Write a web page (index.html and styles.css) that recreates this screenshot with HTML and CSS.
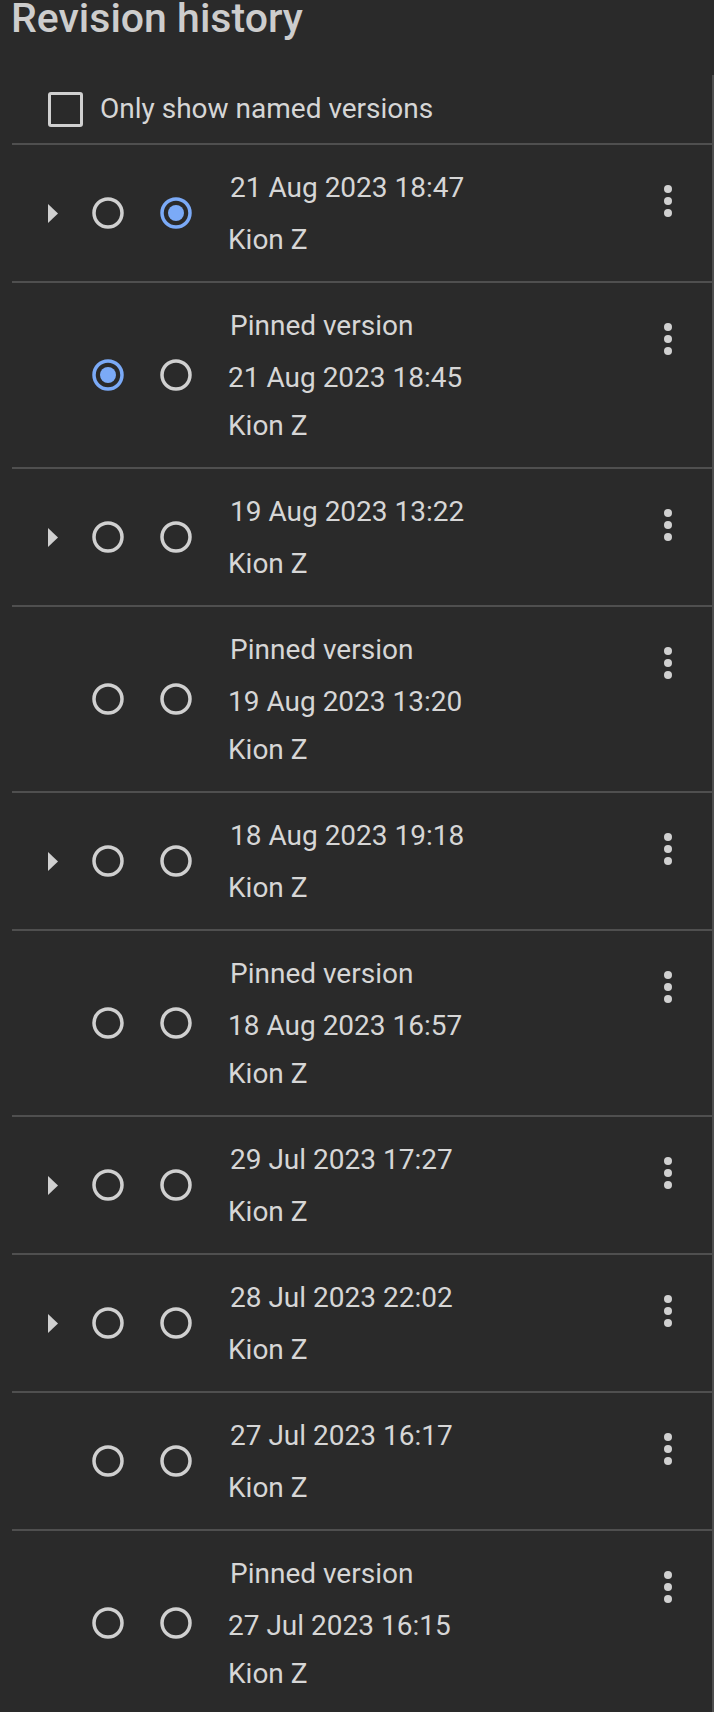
FILE: index.html
```html
<!DOCTYPE html>
<html lang="en">
<head>
<meta charset="utf-8">
<title>Revision history</title>
<link rel="stylesheet" href="styles.css">
</head>
<body>
<h1 class="title">Revision history</h1>
<div class="panel">
  <label class="filter">
    <span class="checkbox"></span>
    <span class="filter-label">Only show named versions</span>
  </label>
  <ul class="revs">
    <li class="rev">
      <span class="expander"><svg viewBox="0 0 10 19" width="10" height="19"><path d="M0 0 L10 9.5 L0 19 Z"/></svg></span>
      <span class="radio-cell"><svg class="radio" viewBox="0 0 32 32"><circle cx="16" cy="16" r="14"/></svg></span>
      <span class="radio-cell"><svg class="radio on" viewBox="0 0 32 32"><circle cx="16" cy="16" r="14"/><circle class="dot" cx="16" cy="16" r="8"/></svg></span>
      <div class="info"><div class="line first">21 Aug 2023 18:47</div><div class="line">Kion Z</div></div>
      <span class="more"><svg viewBox="0 0 48 48"><circle cx="24" cy="12" r="4"/><circle cx="24" cy="24" r="4"/><circle cx="24" cy="36" r="4"/></svg></span>
    </li>
    <li class="rev">
      <span class="expander"></span>
      <span class="radio-cell"><svg class="radio on" viewBox="0 0 32 32"><circle cx="16" cy="16" r="14"/><circle class="dot" cx="16" cy="16" r="8"/></svg></span>
      <span class="radio-cell"><svg class="radio" viewBox="0 0 32 32"><circle cx="16" cy="16" r="14"/></svg></span>
      <div class="info"><div class="line first">Pinned version</div><div class="line">21 Aug 2023 18:45</div><div class="line">Kion Z</div></div>
      <span class="more"><svg viewBox="0 0 48 48"><circle cx="24" cy="12" r="4"/><circle cx="24" cy="24" r="4"/><circle cx="24" cy="36" r="4"/></svg></span>
    </li>
    <li class="rev">
      <span class="expander"><svg viewBox="0 0 10 19" width="10" height="19"><path d="M0 0 L10 9.5 L0 19 Z"/></svg></span>
      <span class="radio-cell"><svg class="radio" viewBox="0 0 32 32"><circle cx="16" cy="16" r="14"/></svg></span>
      <span class="radio-cell"><svg class="radio" viewBox="0 0 32 32"><circle cx="16" cy="16" r="14"/></svg></span>
      <div class="info"><div class="line first">19 Aug 2023 13:22</div><div class="line">Kion Z</div></div>
      <span class="more"><svg viewBox="0 0 48 48"><circle cx="24" cy="12" r="4"/><circle cx="24" cy="24" r="4"/><circle cx="24" cy="36" r="4"/></svg></span>
    </li>
    <li class="rev">
      <span class="expander"></span>
      <span class="radio-cell"><svg class="radio" viewBox="0 0 32 32"><circle cx="16" cy="16" r="14"/></svg></span>
      <span class="radio-cell"><svg class="radio" viewBox="0 0 32 32"><circle cx="16" cy="16" r="14"/></svg></span>
      <div class="info"><div class="line first">Pinned version</div><div class="line">19 Aug 2023 13:20</div><div class="line">Kion Z</div></div>
      <span class="more"><svg viewBox="0 0 48 48"><circle cx="24" cy="12" r="4"/><circle cx="24" cy="24" r="4"/><circle cx="24" cy="36" r="4"/></svg></span>
    </li>
    <li class="rev">
      <span class="expander"><svg viewBox="0 0 10 19" width="10" height="19"><path d="M0 0 L10 9.5 L0 19 Z"/></svg></span>
      <span class="radio-cell"><svg class="radio" viewBox="0 0 32 32"><circle cx="16" cy="16" r="14"/></svg></span>
      <span class="radio-cell"><svg class="radio" viewBox="0 0 32 32"><circle cx="16" cy="16" r="14"/></svg></span>
      <div class="info"><div class="line first">18 Aug 2023 19:18</div><div class="line">Kion Z</div></div>
      <span class="more"><svg viewBox="0 0 48 48"><circle cx="24" cy="12" r="4"/><circle cx="24" cy="24" r="4"/><circle cx="24" cy="36" r="4"/></svg></span>
    </li>
    <li class="rev">
      <span class="expander"></span>
      <span class="radio-cell"><svg class="radio" viewBox="0 0 32 32"><circle cx="16" cy="16" r="14"/></svg></span>
      <span class="radio-cell"><svg class="radio" viewBox="0 0 32 32"><circle cx="16" cy="16" r="14"/></svg></span>
      <div class="info"><div class="line first">Pinned version</div><div class="line">18 Aug 2023 16:57</div><div class="line">Kion Z</div></div>
      <span class="more"><svg viewBox="0 0 48 48"><circle cx="24" cy="12" r="4"/><circle cx="24" cy="24" r="4"/><circle cx="24" cy="36" r="4"/></svg></span>
    </li>
    <li class="rev">
      <span class="expander"><svg viewBox="0 0 10 19" width="10" height="19"><path d="M0 0 L10 9.5 L0 19 Z"/></svg></span>
      <span class="radio-cell"><svg class="radio" viewBox="0 0 32 32"><circle cx="16" cy="16" r="14"/></svg></span>
      <span class="radio-cell"><svg class="radio" viewBox="0 0 32 32"><circle cx="16" cy="16" r="14"/></svg></span>
      <div class="info"><div class="line first">29 Jul 2023 17:27</div><div class="line">Kion Z</div></div>
      <span class="more"><svg viewBox="0 0 48 48"><circle cx="24" cy="12" r="4"/><circle cx="24" cy="24" r="4"/><circle cx="24" cy="36" r="4"/></svg></span>
    </li>
    <li class="rev">
      <span class="expander"><svg viewBox="0 0 10 19" width="10" height="19"><path d="M0 0 L10 9.5 L0 19 Z"/></svg></span>
      <span class="radio-cell"><svg class="radio" viewBox="0 0 32 32"><circle cx="16" cy="16" r="14"/></svg></span>
      <span class="radio-cell"><svg class="radio" viewBox="0 0 32 32"><circle cx="16" cy="16" r="14"/></svg></span>
      <div class="info"><div class="line first">28 Jul 2023 22:02</div><div class="line">Kion Z</div></div>
      <span class="more"><svg viewBox="0 0 48 48"><circle cx="24" cy="12" r="4"/><circle cx="24" cy="24" r="4"/><circle cx="24" cy="36" r="4"/></svg></span>
    </li>
    <li class="rev">
      <span class="expander"></span>
      <span class="radio-cell"><svg class="radio" viewBox="0 0 32 32"><circle cx="16" cy="16" r="14"/></svg></span>
      <span class="radio-cell"><svg class="radio" viewBox="0 0 32 32"><circle cx="16" cy="16" r="14"/></svg></span>
      <div class="info"><div class="line first">27 Jul 2023 16:17</div><div class="line">Kion Z</div></div>
      <span class="more"><svg viewBox="0 0 48 48"><circle cx="24" cy="12" r="4"/><circle cx="24" cy="24" r="4"/><circle cx="24" cy="36" r="4"/></svg></span>
    </li>
    <li class="rev">
      <span class="expander"></span>
      <span class="radio-cell"><svg class="radio" viewBox="0 0 32 32"><circle cx="16" cy="16" r="14"/></svg></span>
      <span class="radio-cell"><svg class="radio" viewBox="0 0 32 32"><circle cx="16" cy="16" r="14"/></svg></span>
      <div class="info"><div class="line first">Pinned version</div><div class="line">27 Jul 2023 16:15</div><div class="line">Kion Z</div></div>
      <span class="more"><svg viewBox="0 0 48 48"><circle cx="24" cy="12" r="4"/><circle cx="24" cy="24" r="4"/><circle cx="24" cy="36" r="4"/></svg></span>
    </li>
  </ul>
</div>
</body>
</html>
```
FILE: styles.css
```css
html, body {
  margin: 0;
  padding: 0;
  overflow: hidden;
  background: #2a2a2a;
}
body {
  font-family: Roboto, "Noto Sans", "Liberation Sans", sans-serif;
  color: #d6d6d6;
}
.title {
  margin: -6px 0 33px 11px;
  font-size: 41px;
  line-height: 48px;
  font-weight: 500;
  color: #cdcdcd;
}
.panel {
  margin-left: 12px;
  border-right: 2px solid #4d4d4d;
}
.filter {
  display: flex;
  align-items: center;
  height: 48px;
  padding: 10px 0 10px 36px;
  border-bottom: 2px solid #4f4f4f;
  font-size: 28px;
  line-height: 48px;
}
.checkbox {
  box-sizing: border-box;
  width: 35px;
  height: 35px;
  border: 3.5px solid #d0d0d0;
  border-radius: 3px;
  margin-right: 17px;
}
.revs {
  list-style: none;
  margin: 0;
  padding: 0;
}
.rev {
  display: flex;
  align-items: center;
  padding-left: 36px;
  padding-right: 20px;
  border-bottom: 2px solid #4f4f4f;
}
.expander {
  width: 26px;
  display: flex;
  align-items: center;
}
.expander svg {
  display: block;
  fill: #d0d0d0;
}
.radio-cell {
  width: 68px;
  display: flex;
  justify-content: center;
  align-items: center;
}
.radio {
  display: block;
  width: 32px;
  height: 32px;
  fill: none;
  stroke: #d0d0d0;
  stroke-width: 3.5;
}
.radio.on {
  stroke: #7baaf7;
}
.radio .dot {
  fill: #7baaf7;
  stroke: none;
}
.info {
  flex: 1;
  padding: 19px 0 17px 18px;
  font-size: 28px;
  line-height: 48px;
}
.line {
  white-space: nowrap;
}
.line.first {
  padding-left: 2px;
  margin-bottom: 4px;
}
.more {
  align-self: flex-start;
  margin-top: 32px;
  width: 48px;
  height: 48px;
}
.more svg {
  display: block;
  width: 48px;
  height: 48px;
  fill: #d0d0d0;
}
```
